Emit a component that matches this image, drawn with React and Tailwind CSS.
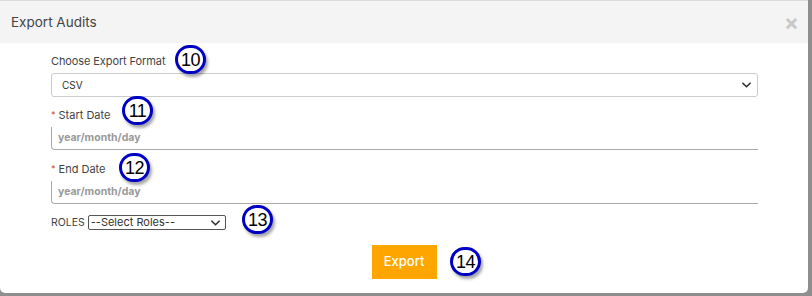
import React from 'react';

const Marker = ({ n, className }) => (
  <div
    className={`absolute w-[31px] h-[29px] rounded-full border-[3px] border-[#0000c4] bg-white flex items-center justify-center shadow-[2px_3px_3px_rgba(0,0,0,0.35)] ${className}`}
  >
    <span className="text-[18px] leading-none text-black tracking-[-0.5px]" style={{ fontFamily: '"Liberation Sans", Arial, sans-serif' }}>
      {n}
    </span>
  </div>
);

const Chevron = ({ className }) => (
  <svg className={className} viewBox="0 0 10 6" fill="none">
    <path d="M1 1l4 4 4-4" stroke="#333" strokeWidth="1.8" strokeLinecap="round" strokeLinejoin="round" />
  </svg>
);

const DateField = ({ label }) => (
  <div>
    <div className="h-[14px] text-[11px] leading-[14px] text-[#444]">
      <span className="text-[9px] align-top text-[#c44] mr-[3px]">*</span>
      {label}
    </div>
    <div className="mt-[5px] h-[23px] border-l border-b border-[#aaa] rounded-bl-[4px] flex items-center pl-[6px]">
      <span className="text-[10.5px] font-bold text-[#9a9a9a]">year/month/day</span>
    </div>
  </div>
);

export default function App() {
  return (
    <div className="w-[812px] h-[296px] bg-[#8e8e8e] overflow-hidden" style={{ fontFamily: 'Inter, "Noto Sans", sans-serif' }}>
      <div className="relative w-[808px] h-[293px] bg-white rounded-b-[5px] border-t border-[#dcdcdc]">
        <div className="h-[42px] bg-[#f4f4f4] flex items-center justify-between pl-[11px] pr-[9px]">
          <span className="text-[13.5px] text-[#444]">Export Audits</span>
          <span className="text-[22px] font-bold leading-none text-[#c8c8c8]">×</span>
        </div>

        <div className="pl-[51px] pr-[50px] pt-[11px]">
          <div className="h-[14px] text-[11px] leading-[14px] text-[#444] tracking-[-0.1px]">Choose Export Format</div>
          <div className="mt-[5px] h-[24px] border border-[#ccc] rounded-[3px] flex items-center justify-between pl-[10px] pr-[6px]">
            <span className="text-[10px] text-[#333]">CSV</span>
            <Chevron className="w-[9px] h-[6px]" />
          </div>

          <div className="mt-[11px]">
            <DateField label="Start Date" />
          </div>
          <div className="mt-[12px]">
            <DateField label="End Date" />
          </div>

          <div className="mt-[11px] flex items-center">
            <span className="text-[10.5px] text-[#444] mr-[3px]">ROLES</span>
            <div className="w-[138px] h-[15px] border border-[#555] rounded-[2px] flex items-center justify-between pl-[2px] pr-[5px]">
              <span className="text-[11px] leading-none text-[#333]">--Select Roles--</span>
              <Chevron className="w-[9px] h-[6px]" />
            </div>
          </div>

          <div className="mt-[14px] flex justify-center pr-[1px]">
            <button className="w-[65px] h-[34px] bg-[#ffa500] text-white text-[13px] font-medium">Export</button>
          </div>
        </div>

        <Marker n="10" className="left-[175px] top-[44px]" />
        <Marker n="11" className="left-[122px] top-[95px]" />
        <Marker n="12" className="left-[119px] top-[152px]" />
        <Marker n="13" className="left-[242px] top-[204px]" />
        <Marker n="14" className="left-[450px] top-[246px]" />
      </div>
    </div>
  );
}
